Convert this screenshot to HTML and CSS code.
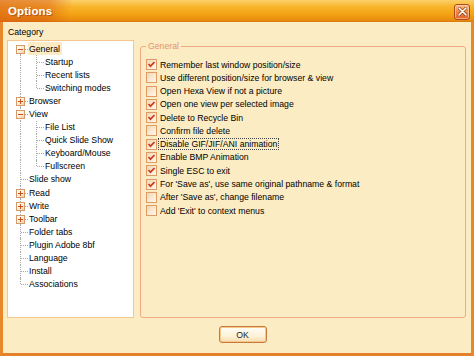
FILE: index.html
```html
<!DOCTYPE html>
<html>
  <head>
    <title>Options</title>
    <link rel="stylesheet" href="styles.css">
  </head>
  <body>
    <div class="window">
      <div class="titlebar">
        <span class="title">Options</span>
        <button class="close" title="Close">
          <svg width="9" height="9" viewBox="0 0 9 9">
            <path d="M1 1 L8 8 M8 1 L1 8" stroke="#8a3a10" stroke-width="3" stroke-linecap="round" />
            <path d="M1 1 L8 8 M8 1 L1 8" stroke="#fff" stroke-width="1.6" stroke-linecap="round" />
          </svg>
        </button>
      </div>

      <div class="content">
        <div class="category-label">Category</div>

        <div class="panes">
          <ul class="tree">
            <li class="row"><span class="cell first"><span class="expander minus"></span></span><span class="label selected">General</span></li>
            <li class="row"><span class="cell v"></span><span class="cell tee"></span><span class="label">Startup</span></li>
            <li class="row"><span class="cell v"></span><span class="cell tee"></span><span class="label">Recent lists</span></li>
            <li class="row"><span class="cell v"></span><span class="cell end"></span><span class="label">Switching modes</span></li>
            <li class="row"><span class="cell tee"><span class="expander plus"></span></span><span class="label">Browser</span></li>
            <li class="row"><span class="cell tee"><span class="expander minus"></span></span><span class="label">View</span></li>
            <li class="row"><span class="cell v"></span><span class="cell tee"></span><span class="label">File List</span></li>
            <li class="row"><span class="cell v"></span><span class="cell tee"></span><span class="label">Quick Slide Show</span></li>
            <li class="row"><span class="cell v"></span><span class="cell tee"></span><span class="label">Keyboard/Mouse</span></li>
            <li class="row"><span class="cell v"></span><span class="cell end"></span><span class="label">Fullscreen</span></li>
            <li class="row"><span class="cell tee"></span><span class="label">Slide show</span></li>
            <li class="row"><span class="cell tee"><span class="expander plus"></span></span><span class="label">Read</span></li>
            <li class="row"><span class="cell tee"><span class="expander plus"></span></span><span class="label">Write</span></li>
            <li class="row"><span class="cell tee"><span class="expander plus"></span></span><span class="label">Toolbar</span></li>
            <li class="row"><span class="cell tee"></span><span class="label">Folder tabs</span></li>
            <li class="row"><span class="cell tee"></span><span class="label">Plugin Adobe 8bf</span></li>
            <li class="row"><span class="cell tee"></span><span class="label">Language</span></li>
            <li class="row"><span class="cell tee"></span><span class="label">Install</span></li>
            <li class="row"><span class="cell end"></span><span class="label">Associations</span></li>
          </ul>

          <fieldset class="group">
            <legend>General</legend>
            <div class="check"><span class="box"><svg width="9" height="9" viewBox="0 0 9 9"><path d="M1.5 4 L3.5 6.2 L7.5 2" /></svg></span>Remember last window position/size</div>
            <div class="check"><span class="box"></span>Use different position/size for browser &amp; view</div>
            <div class="check"><span class="box"></span>Open Hexa View if not a picture</div>
            <div class="check"><span class="box"><svg width="9" height="9" viewBox="0 0 9 9"><path d="M1.5 4 L3.5 6.2 L7.5 2" /></svg></span>Open one view per selected image</div>
            <div class="check"><span class="box"><svg width="9" height="9" viewBox="0 0 9 9"><path d="M1.5 4 L3.5 6.2 L7.5 2" /></svg></span>Delete to Recycle Bin</div>
            <div class="check"><span class="box"></span>Confirm file delete</div>
            <div class="check"><span class="box"><svg width="9" height="9" viewBox="0 0 9 9"><path d="M1.5 4 L3.5 6.2 L7.5 2" /></svg></span><span class="focus">Disable GIF/JIF/ANI animation</span></div>
            <div class="check"><span class="box"><svg width="9" height="9" viewBox="0 0 9 9"><path d="M1.5 4 L3.5 6.2 L7.5 2" /></svg></span>Enable BMP Animation</div>
            <div class="check"><span class="box"><svg width="9" height="9" viewBox="0 0 9 9"><path d="M1.5 4 L3.5 6.2 L7.5 2" /></svg></span>Single ESC to exit</div>
            <div class="check"><span class="box"><svg width="9" height="9" viewBox="0 0 9 9"><path d="M1.5 4 L3.5 6.2 L7.5 2" /></svg></span>For 'Save as', use same original pathname &amp; format</div>
            <div class="check"><span class="box"></span>After 'Save as', change filename</div>
            <div class="check"><span class="box"></span>Add 'Exit' to context menus</div>
          </fieldset>
        </div>

        <div class="buttons">
          <button class="ok">OK</button>
        </div>
      </div>
    </div>
  </body>
</html>
```

FILE: styles.css
```css
html,
body {
  margin: 0;
  padding: 0;
}

body {
  width: 474px;
  height: 356px;
  overflow: hidden;
  font-family: "Liberation Sans", Arial, sans-serif;
  font-size: 8.7px;
  color: #000;
}

.window {
  width: 474px;
  height: 356px;
  display: flex;
  flex-direction: column;
  box-sizing: border-box;
}

/* title bar */
.titlebar {
  height: 22px;
  flex: none;
  display: flex;
  align-items: center;
  justify-content: space-between;
  padding: 0 4px 0 8px;
  background:
    linear-gradient(100deg, rgba(214, 84, 18, 0.55) 0, rgba(214, 84, 18, 0.45) 48px, rgba(214, 84, 18, 0) 72px),
    linear-gradient(to bottom, #fbd06c 0, #f8b52c 30%, #f4a214 65%, #e88c0e 92%, #d77a12 100%);
}

.title {
  color: #fff;
  font-weight: bold;
  font-size: 11.5px;
  text-shadow: 1px 1px 0 #b8581a;
  letter-spacing: 0.1px;
}

.close {
  width: 16px;
  height: 16px;
  padding: 0;
  margin-top: 1px;
  display: flex;
  align-items: center;
  justify-content: center;
  border: 1px solid #b0481a;
  border-radius: 3px;
  background: linear-gradient(to bottom, #fbc08a 0, #f28a44 45%, #e0602a 100%);
  box-shadow: inset 0 0 0 1px rgba(255, 220, 180, 0.6);
}

/* body */
.content {
  flex: 1;
  display: flex;
  flex-direction: column;
  background: #fcecc3;
  border-left: 3px solid #e8882a;
  border-right: 3px solid #e8882a;
  border-bottom: 3px solid #e3822a;
  padding: 3px 5px 0 4px;
}

.category-label {
  height: 15px;
  line-height: 15px;
  padding-left: 1px;
}

.panes {
  height: 278px;
  display: flex;
  gap: 6px;
}

/* tree */
.tree {
  width: 127px;
  box-sizing: border-box;
  margin: 0;
  padding: 1px 0 0 4px;
  list-style: none;
  background: #fff;
  border: 1px solid #f4c88c;
}

.row {
  height: 13.1px;
  display: flex;
  align-items: stretch;
}

.cell {
  position: relative;
  width: 16px;
  flex: none;
}

.cell::before,
.cell::after {
  content: "";
  position: absolute;
}

.cell.v::before,
.cell.tee::before {
  left: 8px;
  top: 0;
  bottom: 0;
  border-left: 1px dotted #a8a8a8;
}

.cell.first::before {
  left: 8px;
  top: 50%;
  bottom: 0;
  border-left: 1px dotted #a8a8a8;
}

.cell.end::before {
  left: 8px;
  top: 0;
  height: 50%;
  border-left: 1px dotted #a8a8a8;
}

.cell.tee::after,
.cell.end::after,
.cell.first::after {
  left: 9px;
  top: 50%;
  width: 7px;
  border-top: 1px dotted #a8a8a8;
}

.expander {
  position: absolute;
  z-index: 1;
  left: 4px;
  top: calc(50% - 4px);
  width: 7px;
  height: 7px;
  border: 1px solid #d49a68;
  background: linear-gradient(135deg, #fff 0, #fbefdd 50%, #f0cfa6 100%);
}

.expander::before,
.expander::after {
  content: "";
  position: absolute;
  background: #c8501c;
}

.expander::before {
  left: 1px;
  top: 3px;
  width: 5px;
  height: 1px;
}

.expander.plus::after {
  left: 3px;
  top: 1px;
  width: 1px;
  height: 5px;
}

.label {
  display: flex;
  align-items: center;
  padding: 0 2px 0 1px;
  white-space: nowrap;
}

.label.selected {
  background: #fcecc6;
}

/* group box */
.group {
  flex: 1;
  margin: 0;
  padding: 6px 5px 0 5px;
  border: 1px solid #f0ab84;
  border-radius: 3px;
  min-width: 0;
}

.group legend {
  padding: 0 2px;
  line-height: 12px;
  color: #e3946a;
}

.check {
  height: 13.27px;
  display: flex;
  align-items: center;
  white-space: nowrap;
}

.box {
  width: 9px;
  height: 9px;
  flex: none;
  margin-right: 3px;
  border: 1px solid #e09a66;
  background: linear-gradient(135deg, #f2d6b2 0, #f9ead2 55%, #fff8ec 100%);
}

.box svg {
  display: block;
}

.box path {
  fill: none;
  stroke: #cc3a1e;
  stroke-width: 1.7;
}

.focus {
  outline: 1px dotted #444;
  padding: 0 1px;
  margin-left: -1px;
}

/* buttons */
.buttons {
  display: flex;
  justify-content: center;
  padding-top: 8px;
}

.ok {
  width: 48px;
  height: 17px;
  margin-left: 12px;
  padding: 0;
  font-family: "Liberation Sans", Arial, sans-serif;
  font-size: 8.7px;
  color: #222;
  border: 1px solid #c8783a;
  border-radius: 3px;
  background: linear-gradient(to bottom, #fffdf6 0, #fdf1d8 60%, #f6dcae 100%);
  box-shadow: inset 0 0 0 1px #f7c888;
}
```
